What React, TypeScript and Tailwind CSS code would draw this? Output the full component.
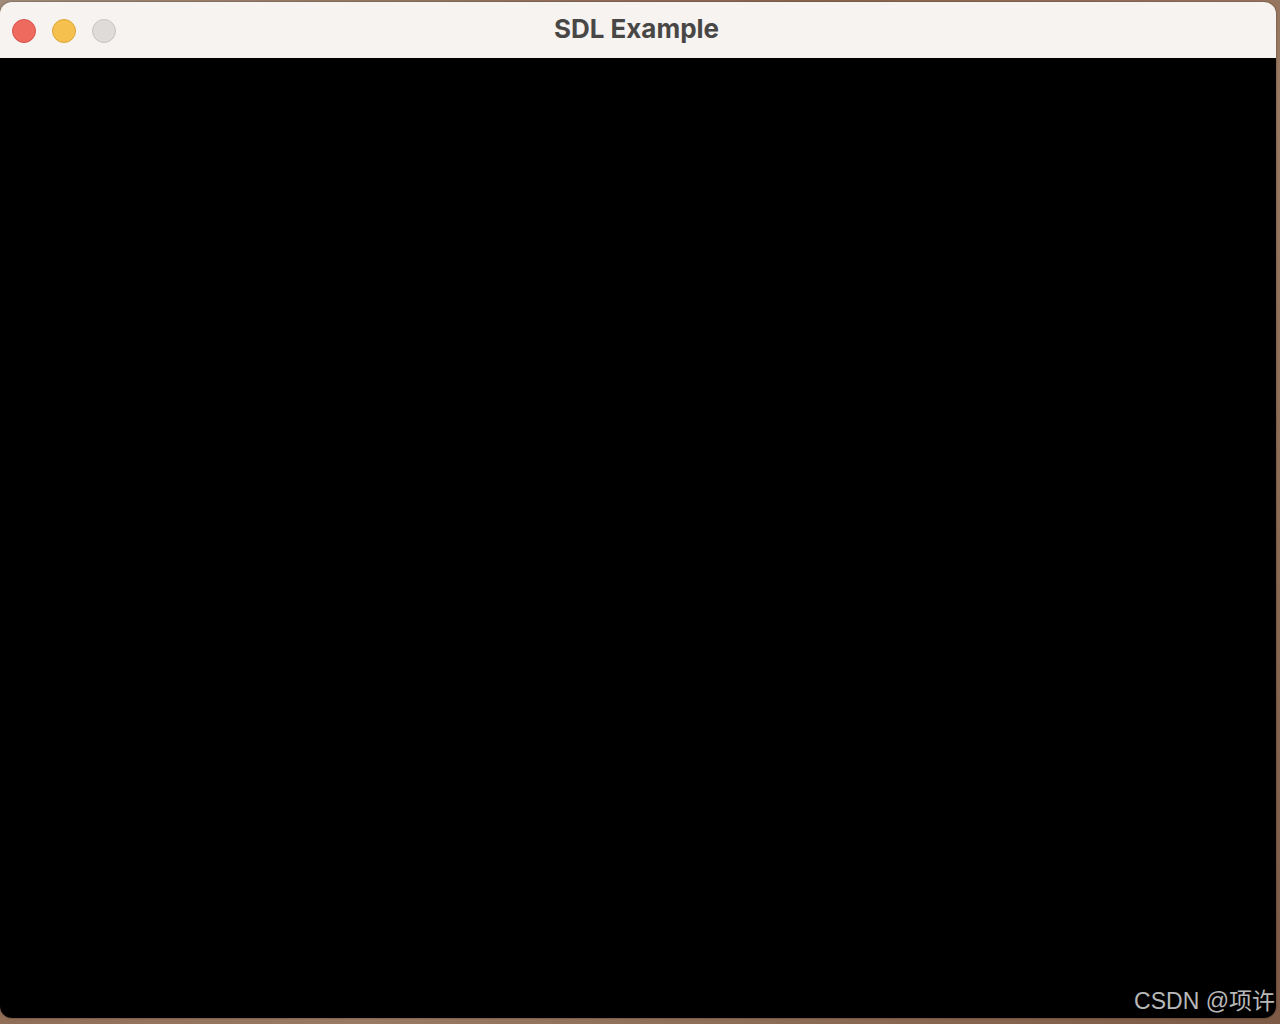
import React from 'react'

export default function App() {
  return (
    <div className="relative h-[1024px] w-[1280px] overflow-hidden bg-[linear-gradient(135deg,#a08a78_0%,#8b6650_35%,#9a7a63_60%,#7d5a45_100%)]">
      <div className="ml-0 mt-[2px] flex h-[1016px] w-[1276px] flex-col overflow-hidden rounded-[12px] shadow-[0_0_2px_rgba(0,0,0,0.5)]">
        {/* title bar */}
        <div className="relative flex h-[56px] shrink-0 items-center bg-[#f6f3f0]">
          <div className="flex items-center gap-[16px] pl-[12px] pt-[1px]">
            <span className="h-[24px] w-[24px] rounded-full border border-[#d9534c] bg-[#ee6a5f]" />
            <span className="h-[24px] w-[24px] rounded-full border border-[#dba738] bg-[#f6c04f]" />
            <span className="h-[24px] w-[24px] rounded-full border border-[#c8c4c0] bg-[#dedbd8]" />
          </div>
          <div
            className="absolute inset-0 flex items-center justify-center pb-[3px] text-[26px] font-bold text-[#494746]"
            style={{ fontFamily: 'Inter, "Liberation Sans", sans-serif' }}
          >
            <span className="ml-[-3px]">SDL Example</span>
          </div>
        </div>
        <div className="flex-1 bg-black" />
      </div>
      <div
        className="absolute bottom-[11px] right-[5px] text-[23px] leading-none text-[#b8b8b8]"
        style={{ fontFamily: '"Liberation Sans", "Noto Sans CJK SC", sans-serif' }}
      >
        CSDN @项许
      </div>
    </div>
  )
}
